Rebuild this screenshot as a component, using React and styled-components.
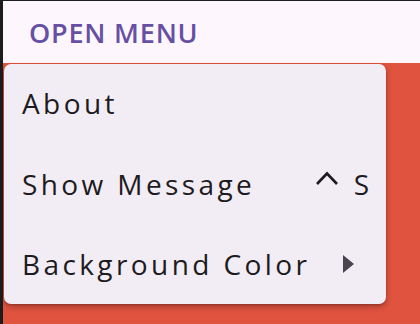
import React from "react"
import styled, { createGlobalStyle } from "styled-components"

const Global = createGlobalStyle`
  html, body {
    margin: 0;
    padding: 0;
    background: #1c1c1c;
  }
  body {
    font-family: "Open Sans", "Noto Sans", sans-serif;
  }
`

const Frame = styled.div`
  width: 417px;
  height: 323px;
  margin-left: 3px;
  margin-top: 1px;
  display: flex;
  flex-direction: column;
  background: #e0533f;
  position: relative;
  overflow: hidden;
`

const Header = styled.header`
  height: 62px;
  flex: none;
  background: #fdf7fd;
  display: flex;
  align-items: center;
  padding-left: 26px;
`

const MenuButton = styled.button`
  border: 0;
  background: none;
  padding: 0;
  font-family: inherit;
  font-size: 27px;
  font-weight: 600;
  letter-spacing: 0.8px;
  color: #6750a4;
  text-transform: uppercase;
  margin-top: 1px;
`

const Menu = styled.ul`
  position: absolute;
  top: 63px;
  left: 1px;
  width: 382px;
  margin: 0;
  padding: 0;
  list-style: none;
  background: #f2edf5;
  border-radius: 7px;
  box-shadow: 0 3px 6px rgba(0, 0, 0, 0.25), 0 1px 2px rgba(0, 0, 0, 0.2);
`

const Item = styled.li`
  height: 80px;
  display: flex;
  align-items: center;
  justify-content: space-between;
  padding: 0 ${(p) => p.$pr || 18}px 0 18px;
  font-size: 28px;
  color: #1d1b20;
  letter-spacing: 3.4px;
`

const Label = styled.span`
  margin-top: ${(p) => p.$dy || 0}px;
`

const Shortcut = styled.span`
  display: flex;
  align-items: center;
  gap: 15px;
  letter-spacing: 0;
`

const Caret = styled.svg`
  width: 24px;
  height: 14px;
  display: block;
  margin-top: -12px;
`

const Arrow = styled.svg`
  width: 11px;
  height: 18px;
  display: block;
`

export default function App() {
  return (
    <>
      <Global />
      <Frame>
        <Header>
          <MenuButton>Open Menu</MenuButton>
        </Header>
        <Menu>
          <Item>
            <Label $dy={-3}>About</Label>
          </Item>
          <Item $pr={17}>
            <Label>Show Message</Label>
            <Shortcut>
              <Caret viewBox="0 0 24 14">
                <path d="M2 13 L12 2.5 L22 13" fill="none" stroke="#1d1b20" strokeWidth="2.6" />
              </Caret>
              S
            </Shortcut>
          </Item>
          <Item $pr={32}>
            <Label>Background Color</Label>
            <Arrow viewBox="0 0 11 18">
              <path d="M0 0 L11 9 L0 18 Z" fill="#49454f" />
            </Arrow>
          </Item>
        </Menu>
      </Frame>
    </>
  )
}
